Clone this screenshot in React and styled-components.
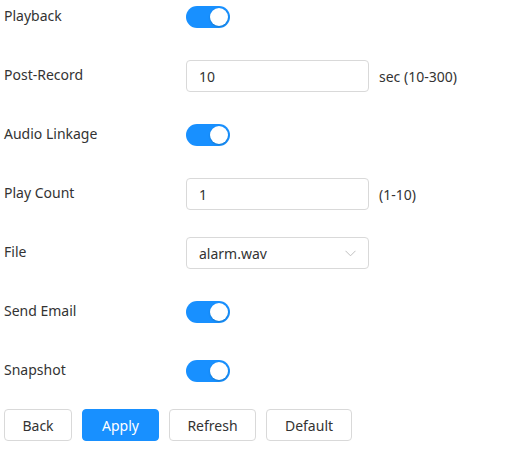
import React, { useState } from "react";
import styled, { createGlobalStyle } from "styled-components";

const Global = createGlobalStyle`
  html, body { margin: 0; padding: 0; background: #fff; }
  body { font-family: "Noto Sans", "Open Sans", Arial, sans-serif; font-size: 14px; color: #333; }
  * { box-sizing: border-box; }
`;

const Page = styled.div`
  padding: 1px 0 0 4px;
  width: 509px;
`;

const Form = styled.div`
  display: flex;
  flex-direction: column;
  gap: 27px;
`;

const Row = styled.div`
  display: flex;
  align-items: center;
  height: 32px;
`;

const Label = styled.div`
  width: 182px;
  flex: none;
  color: #333;
  font-size: 14px;
  padding-bottom: 4px;
`;

const Switch = styled.button`
  position: relative;
  width: 44px;
  height: 22px;
  border: none;
  border-radius: 11px;
  background: ${(p) => (p.$on ? "#1890ff" : "#bfbfbf")};
  padding: 0;
  cursor: pointer;
  flex: none;
  &::after {
    content: "";
    position: absolute;
    top: 2px;
    left: ${(p) => (p.$on ? "24px" : "2px")};
    width: 18px;
    height: 18px;
    border-radius: 50%;
    background: #fff;
    box-shadow: 0 1px 2px rgba(0, 35, 11, 0.2);
  }
`;

const Input = styled.input`
  width: 183px;
  height: 32px;
  border: 1px solid #d9d9d9;
  border-radius: 4px;
  padding: 0 12px;
  font-family: inherit;
  font-size: 14px;
  color: #333;
  outline: none;
  flex: none;
`;

const Hint = styled.span`
  margin-left: 10px;
  color: #333;
  font-size: 14px;
`;

const Select = styled.div`
  width: 183px;
  height: 32px;
  border: 1px solid #d9d9d9;
  border-radius: 4px;
  padding: 0 12px;
  display: flex;
  align-items: center;
  justify-content: space-between;
  color: #333;
  flex: none;
`;

const Footer = styled.div`
  display: flex;
  gap: 10px;
  margin-top: 22px;
`;

const Button = styled.button`
  width: ${(p) => p.$w}px;
  height: 32px;
  padding: 0;
  border-radius: 4px;
  font-family: inherit;
  font-size: 14px;
  cursor: pointer;
  border: 1px solid ${(p) => (p.$primary ? "#1890ff" : "#d9d9d9")};
  background: ${(p) => (p.$primary ? "#1890ff" : "#fff")};
  color: ${(p) => (p.$primary ? "#fff" : "#333")};
`;

const Chevron = () => (
  <svg width="11" height="7" viewBox="0 0 11 7" fill="none">
    <path d="M0.5 0.8 L5.5 5.8 L10.5 0.8" stroke="#bfbfbf" strokeWidth="1" />
  </svg>
);

export default function App() {
  const [sw, setSw] = useState({ playback: true, audio: true, email: true, snap: true });
  const toggle = (k) => setSw((s) => ({ ...s, [k]: !s[k] }));
  return (
    <>
      <Global />
      <Page>
        <Form>
          <Row>
            <Label>Playback</Label>
            <Switch $on={sw.playback} onClick={() => toggle("playback")} />
          </Row>
          <Row>
            <Label>Post-Record</Label>
            <Input defaultValue="10" />
            <Hint>sec (10-300)</Hint>
          </Row>
          <Row>
            <Label>Audio Linkage</Label>
            <Switch $on={sw.audio} onClick={() => toggle("audio")} />
          </Row>
          <Row>
            <Label>Play Count</Label>
            <Input defaultValue="1" />
            <Hint>(1-10)</Hint>
          </Row>
          <Row>
            <Label>File</Label>
            <Select>
              <span>alarm.wav</span>
              <Chevron />
            </Select>
          </Row>
          <Row>
            <Label>Send Email</Label>
            <Switch $on={sw.email} onClick={() => toggle("email")} />
          </Row>
          <Row>
            <Label>Snapshot</Label>
            <Switch $on={sw.snap} onClick={() => toggle("snap")} />
          </Row>
        </Form>
        <Footer>
          <Button $w={68}>Back</Button>
          <Button $w={77} $primary>Apply</Button>
          <Button $w={87}>Refresh</Button>
          <Button $w={86}>Default</Button>
        </Footer>
      </Page>
    </>
  );
}
